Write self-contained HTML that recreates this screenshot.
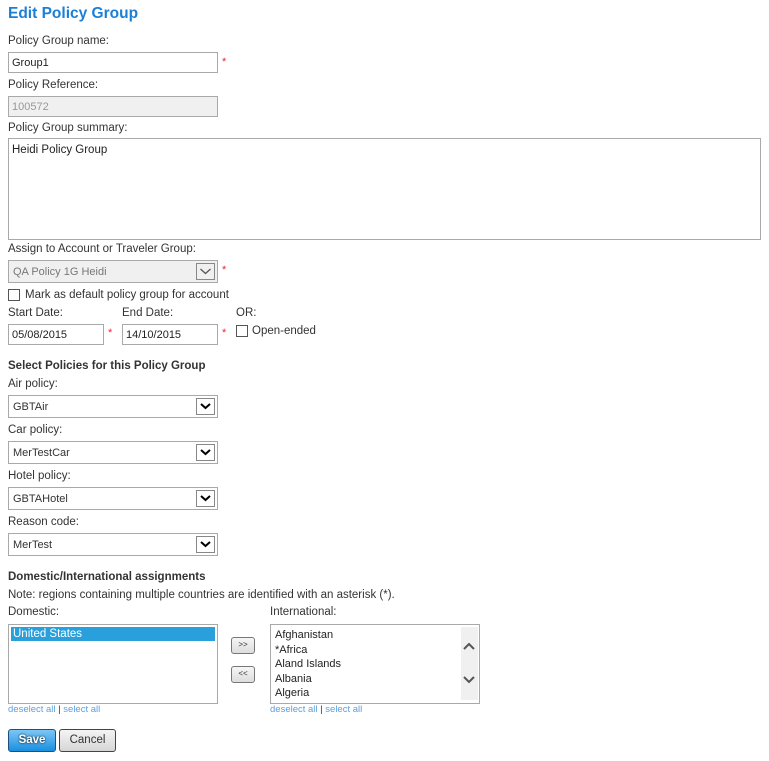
<!DOCTYPE html>
<html><head><style>
body{margin:0;width:769px;height:761px;background:#fff;font-family:"Liberation Sans",sans-serif;font-size:11.5px;color:#333;position:relative;overflow:hidden}
.a{position:absolute;white-space:nowrap}
.in{position:absolute;border:1px solid #a9a9a9;box-sizing:border-box;background:#fff;padding:4px 0 0 3px;font-size:11px;color:#222}
.st{position:absolute;color:#e23;font-size:11px}
.sel{position:absolute;border:1px solid #a9a9a9;box-sizing:border-box;background:#fff;height:23px;width:210px;left:8px;padding:5px 0 0 4px;font-size:11px}
.ar{position:absolute;right:2px;top:2px;width:19px;height:17px;border:1px solid #888;box-sizing:border-box;background:#fff}
.b{font-weight:bold}
.lk{position:absolute;font-size:9.5px;color:#5b9ee0}
.btn{position:absolute;width:24px;height:17px;border:1px solid #777;border-radius:3px;box-sizing:border-box;background:linear-gradient(#f6f6f6,#ddd);font-size:8px;text-align:center;line-height:14px}
.cb{position:absolute;width:12px;height:12px;border:1px solid #555;box-sizing:border-box;background:#fff}
</style></head><body>
<div class="a b" style="left:8px;top:5px;font-size:15.5px;color:#1b7fd8">Edit Policy Group</div>
<div class="a" style="left:8px;top:35px">Policy Group name:</div>
<div class="in" style="left:8px;top:52px;width:210px;height:21px">Group1</div><div class="st" style="left:222px;top:56px">*</div>
<div class="a" style="left:8px;top:79px">Policy Reference:</div>
<div class="in" style="left:8px;top:96px;width:210px;height:21px;background:#f0f0f0;color:#999">100572</div>
<div class="a" style="left:8px;top:122px">Policy Group summary:</div>
<div class="in" style="left:8px;top:138px;width:753px;height:102px;font-size:11.5px;padding:5px 0 0 3px">Heidi Policy Group</div>
<div class="a" style="left:8px;top:243px">Assign to Account or Traveler Group:</div>
<div class="sel" style="top:260px;background:#f0f0f0;color:#777"><span>QA Policy 1G Heidi</span><div class="ar" style="background:#f0f0f0"><svg width="17" height="15"><path d="M3.5 5l5 4.5 5-4.5" stroke="#555" stroke-width="1.3" fill="none"/></svg></div></div><div class="st" style="left:222px;top:264px">*</div>
<div class="cb" style="left:8px;top:289px"></div><div class="a" style="left:25px;top:289px">Mark as default policy group for account</div>
<div class="a" style="left:8px;top:307px">Start Date:</div><div class="a" style="left:122px;top:307px">End Date:</div><div class="a" style="left:236px;top:307px">OR:</div>
<div class="in" style="left:8px;top:324px;width:96px;height:21px">05/08/2015</div><div class="st" style="left:108px;top:327px">*</div>
<div class="in" style="left:122px;top:324px;width:96px;height:21px">14/10/2015</div><div class="st" style="left:222px;top:327px">*</div>
<div class="cb" style="left:236px;top:325px"></div><div class="a" style="left:252px;top:325px">Open-ended</div>
<div class="a b" style="left:8px;top:360px">Select Policies for this Policy Group</div>
<div class="a" style="left:8px;top:378px">Air policy:</div>
<div class="sel" style="top:395px">GBTAir<div class="ar"><svg width="17" height="15"><path d="M4 5l4.5 4 4.5-4" stroke="#000" stroke-width="2" fill="none"/></svg></div></div>
<div class="a" style="left:8px;top:424px">Car policy:</div>
<div class="sel" style="top:441px">MerTestCar<div class="ar"><svg width="17" height="15"><path d="M4 5l4.5 4 4.5-4" stroke="#000" stroke-width="2" fill="none"/></svg></div></div>
<div class="a" style="left:8px;top:470px">Hotel policy:</div>
<div class="sel" style="top:487px">GBTAHotel<div class="ar"><svg width="17" height="15"><path d="M4 5l4.5 4 4.5-4" stroke="#000" stroke-width="2" fill="none"/></svg></div></div>
<div class="a" style="left:8px;top:516px">Reason code:</div>
<div class="sel" style="top:533px">MerTest<div class="ar"><svg width="17" height="15"><path d="M4 5l4.5 4 4.5-4" stroke="#000" stroke-width="2" fill="none"/></svg></div></div>
<div class="a b" style="left:8px;top:571px">Domestic/International assignments</div>
<div class="a" style="left:8px;top:589px">Note: regions containing multiple countries are identified with an asterisk (*).</div>
<div class="a" style="left:8px;top:606px">Domestic:</div><div class="a" style="left:270px;top:606px">International:</div>
<div class="in" style="left:8px;top:624px;width:210px;height:80px;padding:2px"><div style="background:#29a0dc;color:#fff;height:14px;line-height:15px;padding-left:2px;font-size:11.5px">United States</div></div>
<div class="btn" style="left:231px;top:637px">&gt;&gt;</div><div class="btn" style="left:231px;top:666px">&lt;&lt;</div>
<div class="in" style="left:270px;top:624px;width:210px;height:80px;padding:3px 0 0 4px;line-height:14.5px;font-size:11px">Afghanistan<br>*Africa<br>Aland Islands<br>Albania<br>Algeria
<div style="position:absolute;left:190px;top:2px;width:17px;height:73px;background:#f0f0f0"><svg width="17" height="73"><path d="M3 22l5-5 5 5M3 50l5 5 5-5" stroke="#555" stroke-width="2" fill="none"/></svg></div></div>
<div class="lk" style="left:8px;top:704px">deselect all <span style="color:#333">|</span> select all</div>
<div class="lk" style="left:270px;top:704px">deselect all <span style="color:#333">|</span> select all</div>
<div class="a" style="left:8px;top:729px;width:48px;height:23px;box-sizing:border-box;border:1px solid #1d4f80;border-radius:3px;background:linear-gradient(#7cc6f6,#1b8fe0);color:#fff;font-weight:bold;text-align:center;line-height:21px;text-shadow:0 0 2px #000">Save</div>
<div class="a" style="left:59px;top:729px;width:57px;height:23px;box-sizing:border-box;border:1px solid #444;border-radius:3px;background:linear-gradient(#f4f4f4,#d6d6d6);text-align:center;line-height:21px">Cancel</div>
</body></html>
